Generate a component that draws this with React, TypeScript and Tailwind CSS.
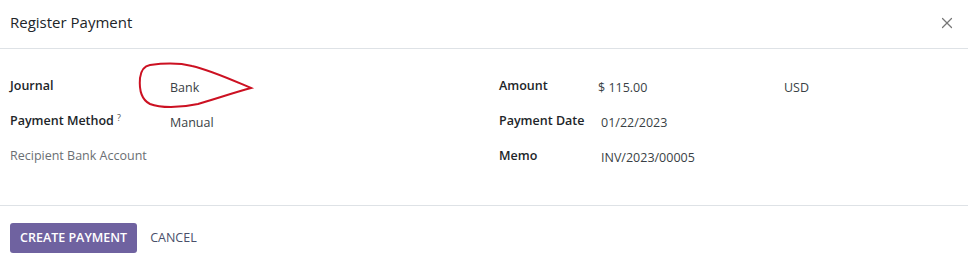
import { X } from "lucide-react";

const font = { fontFamily: '"Open Sans", "Noto Sans", sans-serif' };

function Field({
  label,
  children,
  muted,
  help,
  labelWidth,
}: {
  label: string;
  children?: React.ReactNode;
  muted?: boolean;
  help?: boolean;
  labelWidth: string;
}) {
  return (
    <div className="flex items-start h-[35px]">
      <div
        className={`${labelWidth} shrink-0 text-[12.5px] ${
          muted ? "text-[#6b6f74]" : "font-semibold text-[#212529]"
        }`}
      >
        {label}
        {help && <sup className="ml-[3px] text-[9px] font-normal text-[#555]">?</sup>}
      </div>
      <div className="flex-1 text-[12.5px] text-[#3a3f45] pt-[2px]">{children}</div>
    </div>
  );
}

export default function App() {
  return (
    <div className="w-[968px] h-[261px] bg-white relative overflow-hidden" style={font}>
      <header className="h-[49px] flex items-center justify-between pl-[10px] pr-[12px] border-b border-[#dee2e6]">
        <h1 className="text-[15px] text-[#212529] -mt-[4px]">Register Payment</h1>
        <X className="w-[18px] h-[18px] text-[#777] -mt-[2px]" strokeWidth={1.6} />
      </header>

      <div className="h-[157px] border-b border-[#dee2e6] grid grid-cols-[489px_1fr] pl-[10px] pt-[28px]">
        <div>
          <Field label="Journal" labelWidth="w-[160px]">
            Bank
          </Field>
          <Field label="Payment Method" labelWidth="w-[160px]" help>
            Manual
          </Field>
          <Field label="Recipient Bank Account" labelWidth="w-[160px]" muted />
        </div>
        <div>
          <Field label="Amount" labelWidth="w-[99px]">
            <div className="flex">
              <span className="w-[186px]">$ 115.00</span>
              <span>USD</span>
            </div>
          </Field>
          <Field label="Payment Date" labelWidth="w-[102px]">
            01/22/2023
          </Field>
          <Field label="Memo" labelWidth="w-[102px]">
            INV/2023/00005
          </Field>
        </div>
      </div>

      <footer className="flex items-center gap-[13px] pl-[10px] pt-[17px]">
        <button className="h-[30px] px-[10px] rounded-[3px] bg-[#6f62a0] text-white text-[12.5px] font-semibold">
          CREATE PAYMENT
        </button>
        <button className="text-[12.5px] text-[#4a4f6a]">CANCEL</button>
      </footer>

      <svg
        className="absolute left-0 top-0 pointer-events-none"
        width="968"
        height="261"
        viewBox="0 0 968 261"
      >
        <path
          d="M150 65 C165 63 180 63 192 66 C210 70 232 80 251 88 C236 92 218 98 198 104 C180 108 160 108 150 104 C142 100 139 90 140 78 C141 70 144 66 150 65"
          fill="none"
          stroke="#cc1122"
          strokeWidth="2"
          strokeLinecap="round"
        />
      </svg>
    </div>
  );
}
